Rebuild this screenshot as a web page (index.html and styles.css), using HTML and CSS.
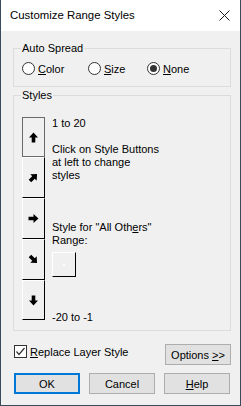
FILE: index.html
```html
<!DOCTYPE html>
<html>
<head>
<meta charset="utf-8">
<link rel="stylesheet" href="styles.css">
</head>
<body>
<div class="window">
  <div class="titlebar">
    <span class="title">Customize Range Styles</span>
    <svg class="close" width="11" height="11" viewBox="0 0 11 11"><path d="M0.5 0.5 L10.5 10.5 M10.5 0.5 L0.5 10.5" stroke="#1a1a1a" stroke-width="1" fill="none"/></svg>
  </div>
  <div class="content">
    <div class="group group-auto">
      <span class="legend">Auto Spread</span>
      <div class="radios">
        <label class="radio r1"><span class="circle"></span><span><u>C</u>olor</span></label>
        <label class="radio r2"><span class="circle"></span><span><u>S</u>ize</span></label>
        <label class="radio"><span class="circle on"></span><span><u>N</u>one</span></label>
      </div>
    </div>
    <div class="group group-styles">
      <span class="legend">Styles</span>
      <div class="styles-body">
        <div class="stylebtns">
          <div class="sbtn first"><svg width="11" height="11" viewBox="0 0 11 11"><path d="M5.5 0.5 L10 5.5 L7.3 5.5 L7.3 10.5 L3.7 10.5 L3.7 5.5 L1 5.5 Z" fill="#000"/></svg></div>
          <div class="sbtn"><svg width="11" height="11" viewBox="0 0 11 11"><path d="M5.5 0.5 L10 5.5 L7.3 5.5 L7.3 10.5 L3.7 10.5 L3.7 5.5 L1 5.5 Z" fill="#000" transform="rotate(45 5.5 5.5)"/></svg></div>
          <div class="sbtn"><svg width="11" height="11" viewBox="0 0 11 11"><path d="M5.5 0.5 L10 5.5 L7.3 5.5 L7.3 10.5 L3.7 10.5 L3.7 5.5 L1 5.5 Z" fill="#000" transform="rotate(90 5.5 5.5)"/></svg></div>
          <div class="sbtn"><svg width="11" height="11" viewBox="0 0 11 11"><path d="M5.5 0.5 L10 5.5 L7.3 5.5 L7.3 10.5 L3.7 10.5 L3.7 5.5 L1 5.5 Z" fill="#000" transform="rotate(135 5.5 5.5)"/></svg></div>
          <div class="sbtn last"><svg width="11" height="11" viewBox="0 0 11 11"><path d="M5.5 0.5 L10 5.5 L7.3 5.5 L7.3 10.5 L3.7 10.5 L3.7 5.5 L1 5.5 Z" fill="#000" transform="rotate(180 5.5 5.5)"/></svg></div>
        </div>
        <div class="styles-text">
          <div class="t-top">1 to 20</div>
          <div class="t-help">Click on Style Buttons<br>at left to change<br>styles</div>
          <div class="t-others">Style for "All Oth<u>e</u>rs"<br>Range:</div>
          <div class="rangebtn"><span class="dot"></span></div>
          <div class="t-bottom">-20 to -1</div>
        </div>
      </div>
    </div>
    <div class="row-mid">
      <label class="check"><span class="box"><svg width="11" height="11" viewBox="0 0 11 11"><path d="M1.5 5.5 L4 8.5 L9.5 2" stroke="#333" stroke-width="1.2" fill="none"/></svg></span><span><u>R</u>eplace Layer Style</span></label>
      <div class="btn"><span>Options <u>&gt;</u>&gt;</span></div>
    </div>
    <div class="row-bottom">
      <div class="btn default"><span>OK</span></div>
      <div class="btn"><span>Cancel</span></div>
      <div class="btn"><span><u>H</u>elp</span></div>
    </div>
  </div>
</div>
</body>
</html>
```
FILE: styles.css
```css
html, body {
  margin: 0;
  padding: 0;
  background: #f0f0f0;
}
.window {
  width: 241px;
  height: 406px;
  box-sizing: border-box;
  border: 1px solid #3a4b5c;
  border-top: none;
  background: #f0f0f0;
  font-family: "Liberation Sans", Arial, sans-serif;
  font-size: 11px;
  color: #000;
  display: flex;
  flex-direction: column;
}
.titlebar {
  height: 31px;
  background: #fff;
  display: flex;
  align-items: center;
  justify-content: space-between;
  padding: 0 10px 0 9px;
  flex-shrink: 0;
}
.title {
  font-size: 11.4px;
  color: #000;
  margin-top: -1px;
}
.close {
  display: block;
  margin-top: -1px;
}
.content {
  padding: 0 9px 0 12px;
  display: flex;
  flex-direction: column;
}
.group {
  position: relative;
  border: 1px solid #dcdcdc;
  box-sizing: border-box;
}
.legend {
  position: absolute;
  top: -8px;
  left: 7px;
  padding: 0 1px;
  background: #f0f0f0;
  line-height: 14px;
}
.group-auto {
  margin-top: 17px;
  height: 39px;
}
.radios {
  display: flex;
  padding: 13px 0 0 8px;
}
.radio {
  display: flex;
  align-items: center;
  gap: 3px;
  height: 13px;
}
.r1 { width: 66px; }
.r2 { width: 59px; }
.circle {
  width: 13px;
  height: 13px;
  box-sizing: border-box;
  border: 1px solid #333;
  border-radius: 50%;
  background: #fff;
  display: flex;
  align-items: center;
  justify-content: center;
  flex-shrink: 0;
}
.circle.on::after {
  content: "";
  width: 7px;
  height: 7px;
  border-radius: 50%;
  background: #333;
}
.group-styles {
  margin-top: 8px;
  height: 236px;
}
.styles-body {
  display: flex;
  padding: 21px 0 0 8px;
  gap: 7px;
}
.stylebtns {
  display: flex;
  flex-direction: column;
  width: 23px;
}
.sbtn {
  height: 41px;
  box-sizing: border-box;
  border-left: 1px solid #fff;
  border-top: 1px solid #fff;
  border-right: 1px solid #000;
  border-bottom: 1px solid #000;
  display: flex;
  align-items: center;
  justify-content: center;
}
.sbtn.first {
  height: 40px;
  border: 1px solid #6a6a6a;
}
.sbtn.last { height: 40px; }
.sbtn svg { display: block; }
.styles-text {
  display: flex;
  flex-direction: column;
  line-height: 13px;
}
.t-top { margin-top: 0; }
.t-help { margin-top: 13px; }
.t-others { margin-top: 39px; }
.rangebtn {
  margin-top: 5px;
  width: 24px;
  height: 25px;
  box-sizing: border-box;
  border-left: 1px solid #fff;
  border-top: 1px solid #fff;
  border-right: 1px solid #000;
  border-bottom: 1px solid #000;
  display: flex;
  align-items: center;
  justify-content: center;
}
.dot {
  width: 2px;
  height: 2px;
  background: #fff;
}
.t-bottom { margin-top: 34px; }
.row-mid {
  display: flex;
  align-items: center;
  justify-content: space-between;
  margin-top: 13px;
  padding-left: 1px;
}
.check {
  display: flex;
  align-items: center;
  gap: 3px;
  margin-top: -6px;
}
.box {
  width: 13px;
  height: 13px;
  box-sizing: border-box;
  border: 1px solid #333;
  background: #fff;
  display: flex;
  align-items: center;
  justify-content: center;
}
.box svg { display: block; }
.btn {
  width: 66px;
  height: 21px;
  box-sizing: border-box;
  border: 1px solid #adadad;
  background: #e1e1e1;
  display: flex;
  align-items: center;
  justify-content: center;
}
.btn.default {
  border: 2px solid #0078d7;
}
.row-bottom {
  display: flex;
  gap: 9px;
  margin-top: 8px;
  padding-left: 1px;
}
```
